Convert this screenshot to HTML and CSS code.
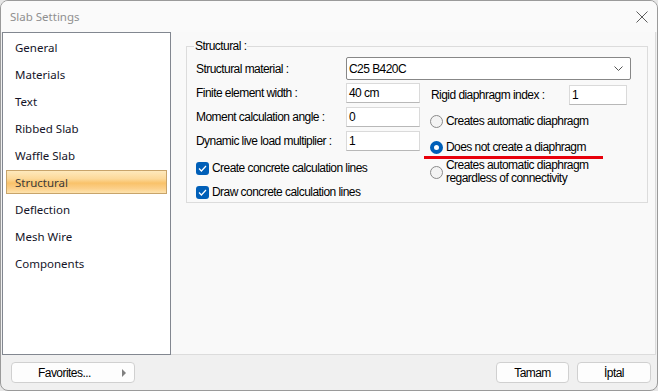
FILE: index.html
```html
<!DOCTYPE html>
<html lang="en">
<head>
  <meta charset="UTF-8">
  <title>Slab Settings</title>
  <link rel="stylesheet" href="styles.css">
</head>
<body>

<div class="window">
  <!-- Title bar -->
  <div class="titlebar">
    <span class="title">Slab Settings</span>
    <svg class="close" width="12" height="12" viewBox="0 0 12 12">
      <path d="M0.5 0.5 L11.5 11.5 M11.5 0.5 L0.5 11.5" stroke="#5c5c5c" stroke-width="1" fill="none"/>
    </svg>
  </div>

  <div class="main">
    <!-- Category list -->
    <ul class="menu">
      <li>General</li>
      <li>Materials</li>
      <li>Text</li>
      <li>Ribbed Slab</li>
      <li>Waffle Slab</li>
      <li class="selected">Structural</li>
      <li>Deflection</li>
      <li>Mesh Wire</li>
      <li>Components</li>
    </ul>

    <!-- Settings panel -->
    <div class="panel">
      <fieldset class="group">
        <legend>Structural :</legend>

        <div class="row material-row">
          <span class="label">Structural material :</span>
          <div class="select">
            <span>C25 B420C</span>
            <svg width="9" height="5" viewBox="0 0 9 5">
              <path d="M0.5 0.5 L4.5 4.5 L8.5 0.5" stroke="#555" stroke-width="1" fill="none"/>
            </svg>
          </div>
        </div>

        <div class="columns">
          <div class="col-left">
            <div class="row">
              <span class="label">Finite element width :</span>
              <div class="textbox">40 cm</div>
            </div>
            <div class="row">
              <span class="label">Moment calculation angle :</span>
              <div class="textbox">0</div>
            </div>
            <div class="row">
              <span class="label">Dynamic live load multiplier :</span>
              <div class="textbox">1</div>
            </div>
            <div class="check first">
              <span class="box">
                <svg width="9" height="7" viewBox="0 0 9 7"><path d="M1 3.5 L3.4 6 L8 1" stroke="#fff" stroke-width="1.2" fill="none"/></svg>
              </span>
              Create concrete calculation lines
            </div>
            <div class="check">
              <span class="box">
                <svg width="9" height="7" viewBox="0 0 9 7"><path d="M1 3.5 L3.4 6 L8 1" stroke="#fff" stroke-width="1.2" fill="none"/></svg>
              </span>
              Draw concrete calculation lines
            </div>
          </div>

          <div class="col-right">
            <div class="row index-row">
              <span class="label">Rigid diaphragm index :</span>
              <div class="textbox small">1</div>
            </div>
            <div class="radio">
              <span class="dot"></span>
              Creates automatic diaphragm
            </div>
            <div class="radio checked">
              <span class="dot"></span>
              Does not create a diaphragm
            </div>
            <div class="underline"></div>
            <div class="radio multi">
              <span class="dot"></span>
              <span>Creates automatic diaphragm<br>regardless of connectivity</span>
            </div>
          </div>
        </div>
      </fieldset>
    </div>
  </div>

  <!-- Footer buttons -->
  <div class="footer">
    <button class="btn favorites">Favorites... <span class="arrow"></span></button>
    <div class="spacer"></div>
    <button class="btn ok">Tamam</button>
    <button class="btn cancel">İptal</button>
  </div>
</div>

</body>
</html>
```

FILE: styles.css
```css
body {
  margin: 0;
  background: #e6e6e6;
  font-family: "Liberation Sans", Arial, sans-serif;
  font-size: 12px;
  letter-spacing: -0.55px;
  color: #000;
}

.window {
  width: 656px;
  height: 389px;
  border: 1px solid #9a9a9a;
  border-radius: 8px;
  background: #f0f0f0;
  overflow: hidden;
  display: flex;
  flex-direction: column;
}

.titlebar {
  height: 31px;
  background: #fafafa;
  display: flex;
  align-items: center;
  padding: 0 8px 0 9px;
  flex-shrink: 0;
}

.title {
  flex: 1;
  font-family: "Noto Sans", "Open Sans", sans-serif;
  font-size: 11.5px;
  letter-spacing: 0;
  color: #8f8f8f;
}

.close {
  margin-right: 1px;
}

.main {
  display: flex;
  height: 323px;
  padding-left: 1px;
}

.menu {
  margin: 0;
  padding: 2px 3px 0;
  list-style: none;
  background: #fff;
  border: 1px solid #828790;
  font-family: "Noto Sans", "Open Sans", sans-serif;
  font-size: 11.5px;
  letter-spacing: 0;
  color: #141428;
  box-sizing: border-box;
  width: 169px;
}

.menu li {
  height: 24px;
  line-height: 24px;
  margin-bottom: 3px;
  padding-left: 8px;
  border: 1px solid transparent;
  box-sizing: border-box;
}

.menu li.selected {
  background: linear-gradient(#fee9bc 0%, #fcd99a 35%, #f9c26a 55%, #fcd08a 80%, #fde3ae 100%);
  border-color: #c8a46a;
  color: #3a3a3a;
}

.panel {
  flex: 1;
  background: #f9f9f9;
  border-right: 1px solid #dcdcdc;
  border-bottom: 1px solid #dcdcdc;
  margin-right: 1px;
}

.group {
  margin: 7px 7px 0 15px;
  padding: 0 7px 1px 9px;
  border: 1px solid #dcdcdc;
  height: 164px;
  box-sizing: border-box;
}

.group legend {
  padding: 0 1px;
  margin-left: -2px;
  line-height: 14px;
}

.row {
  display: flex;
  align-items: center;
  height: 20px;
  white-space: nowrap;
}

.label {
  width: 150px;
  flex-shrink: 0;
}

.material-row {
  height: 23px;
  margin-top: 4px;
}

.select {
  width: 285px;
  height: 23px;
  box-sizing: border-box;
  border: 1px solid #878787;
  border-radius: 2px;
  background: #fff;
  display: flex;
  align-items: center;
  justify-content: space-between;
  padding: 0 7px 0 2px;
}

.textbox {
  width: 74px;
  height: 20px;
  box-sizing: border-box;
  background: #fff;
  border: 1px solid #dadada;
  border-bottom-color: #b8b8b8;
  padding: 0 3px 0 2px;
  line-height: 18px;
}

.textbox.small {
  width: 58px;
}

.columns {
  display: flex;
  margin-top: 3px;
}

.col-left {
  width: 224px;
  display: flex;
  flex-direction: column;
  gap: 4px;
}

.col-right {
  margin-left: 10px;
  padding-top: 2px;
}

.index-row {
  height: 19px;
}

.index-row .label {
  width: 138px;
  padding-left: 1px;
}

.check {
  display: flex;
  align-items: center;
  gap: 3px;
  height: 20px;
  white-space: nowrap;
}

.check.first {
  margin-top: 3px;
}

.check .box {
  width: 13px;
  height: 13px;
  border-radius: 3px;
  background: #005fb8;
  display: flex;
  align-items: center;
  justify-content: center;
}

.radio {
  display: flex;
  align-items: center;
  gap: 3px;
  height: 18px;
  margin-top: 8px;
  white-space: nowrap;
}

.radio .dot {
  width: 13px;
  height: 13px;
  box-sizing: border-box;
  border-radius: 50%;
  border: 1px solid #8a8a8a;
  background: #f3f3f3;
  flex-shrink: 0;
}

.radio.checked .dot {
  border: 4px solid #005fb8;
  background: #fff;
}

.underline {
  width: 179px;
  height: 3px;
  margin: 0 0 0 -6px;
  background: #e8000b;
}

.radio.multi {
  height: 26px;
  line-height: 13px;
  margin-top: 0;
}

.footer {
  display: flex;
  align-items: center;
  padding: 7px 6px 0 10px;
}

.spacer {
  flex: 1;
}

.btn {
  height: 21px;
  border: 1px solid #d0d0d0;
  border-radius: 4px;
  background: #fdfdfd;
  font-family: "Liberation Sans", Arial, sans-serif;
  font-size: 12px;
  letter-spacing: -0.55px;
  color: #000;
  padding: 0;
}

.favorites {
  width: 124px;
  position: relative;
  text-align: left;
  padding-left: 26px;
}

.favorites .arrow {
  position: absolute;
  right: 8px;
  top: 6px;
  border-left: 4px solid #808080;
  border-top: 4px solid transparent;
  border-bottom: 4px solid transparent;
}

.ok {
  width: 73px;
}

.cancel {
  width: 74px;
  margin-left: 8px;
}
```
